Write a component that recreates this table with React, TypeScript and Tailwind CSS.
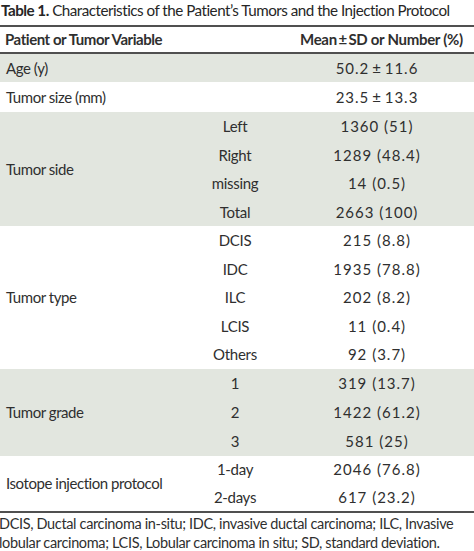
import React from "react";

type Group = { label: string; shaded: boolean; rows: [string, string][]; rowH: string };

const pm = "\u2009±\u2009";

const groups: Group[] = [
  { label: "Age (y)", shaded: true, rows: [["", `50.2${pm}11.6`]], rowH: "h-[28px]" },
  { label: "Tumor size (mm)", shaded: false, rows: [["", `23.5${pm}13.3`]], rowH: "h-[30px]" },
  {
    label: "Tumor side",
    shaded: true,
    rows: [
      ["Left", "1360 (51)"],
      ["Right", "1289 (48.4)"],
      ["missing", "14 (0.5)"],
      ["Total", "2663 (100)"],
    ],
    rowH: "h-[28.5px]",
  },
  {
    label: "Tumor type",
    shaded: false,
    rows: [
      ["DCIS", "215 (8.8)"],
      ["IDC", "1935 (78.8)"],
      ["ILC", "202 (8.2)"],
      ["LCIS", "11 (0.4)"],
      ["Others", "92 (3.7)"],
    ],
    rowH: "h-[28.6px]",
  },
  {
    label: "Tumor grade",
    shaded: true,
    rows: [
      ["1", "319 (13.7)"],
      ["2", "1422 (61.2)"],
      ["3", "581 (25)"],
    ],
    rowH: "h-[29px]",
  },
  {
    label: "Isotope injection protocol",
    shaded: false,
    rows: [
      ["1-day", "2046 (76.8)"],
      ["2-days", "617 (23.2)"],
    ],
    rowH: "h-[27.5px]",
  },
];

export default function App() {
  return (
    <div
      className="w-[474px] h-[551px] bg-white overflow-hidden text-[#2f2f2f]"
      style={{ fontFamily: "Lato, 'Open Sans', sans-serif" }}
    >
      <div className="h-[25px] pl-[1px] pt-[1px] text-[15.2px] leading-[18px] tracking-[-0.5px] whitespace-nowrap text-[#262626]">
        <span className="font-bold">Table 1.</span> Characteristics of the Patient’s Tumors and the Injection Protocol
      </div>
      <div className="border-t-2 border-b-2 border-[#505050]">
        <div className="flex h-[27px] items-center border-b-2 border-[#505050] text-[15px] font-bold">
          <div className="w-[170px] pl-[5px] whitespace-nowrap tracking-[-0.45px]">Patient or Tumor Variable</div>
          <div className="w-[130px]" />
          <div className="w-[154px] text-center whitespace-nowrap tracking-[-0.3px]">Mean{pm}SD or Number (%)</div>
        </div>
        {groups.map((g) => (
          <div key={g.label} className={`flex text-[15px] ${g.shaded ? "bg-[#e2e6df]" : "bg-white"}`}>
            <div className="w-[170px] pl-[6px] flex items-center whitespace-nowrap tracking-[-0.45px]">{g.label}</div>
            <div className="flex flex-col">
              {g.rows.map(([a, b], i) => (
                <div key={i} className={`flex items-center ${g.rowH}`}>
                  <div className="w-[130px] text-center whitespace-nowrap tracking-[-0.3px]">{a}</div>
                  <div className="w-[154px] text-center whitespace-nowrap tracking-[1px]">{b}</div>
                </div>
              ))}
            </div>
          </div>
        ))}
      </div>
      <div className="text-[14.5px] leading-[19px] pt-[1px] -ml-[1px] tracking-[-0.35px] whitespace-nowrap">
        <div>DCIS, Ductal carcinoma in-situ; IDC, invasive ductal carcinoma; ILC, Invasive</div>
        <div>lobular carcinoma; LCIS, Lobular carcinoma in situ; SD, standard deviation.</div>
      </div>
    </div>
  );
}
